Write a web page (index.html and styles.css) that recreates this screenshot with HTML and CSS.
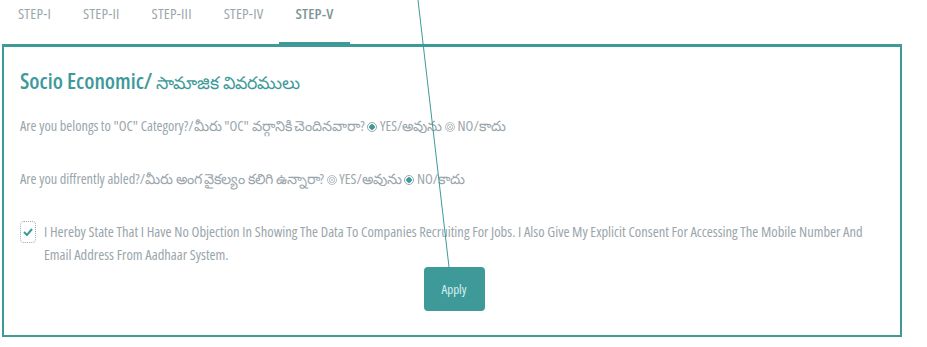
FILE: index.html
```html
<!DOCTYPE html>
<html lang="en">
<head>
    <meta charset="UTF-8">
    <meta name="viewport" content="width=device-width, initial-scale=1.0">
    <title>Registration - Step V</title>
    <link rel="stylesheet" href="styles.css">
</head>
<body>

    <ul class="steps">
        <li class="step">STEP-I</li>
        <li class="step">STEP-II</li>
        <li class="step">STEP-III</li>
        <li class="step">STEP-IV</li>
        <li class="step active">STEP-V</li>
    </ul>

    <div class="panel">
        <h2 class="panel-title">Socio Economic/ <span class="te">సామాజిక వివరములు</span></h2>

        <p class="question">
            Are you belongs to "OC" Category?/మీరు "OC" వర్గానికి చెందినవారా?
            <span class="radio checked"></span> YES/అవును
            <span class="radio"></span> NO/కాదు
        </p>

        <p class="question">
            Are you diffrently abled?/మీరు అంగ వైకల్యం కలిగి ఉన్నారా?
            <span class="radio"></span> YES/అవును
            <span class="radio checked"></span> NO/కాదు
        </p>

        <div class="consent">
            <span class="checkbox">
                <svg width="10" height="8" viewBox="0 0 10 8"><path d="M1 4 L4 7 L9 1" fill="none" stroke="#3d9a99" stroke-width="2"/></svg>
            </span>
            <p class="consent-text">I Hereby State That I Have No Objection In Showing The Data To Companies Recruiting For Jobs. I Also Give My Explicit Consent For Accessing The Mobile Number And Email Address From Aadhaar System.</p>
        </div>

        <div class="actions">
            <button class="apply">Apply</button>
        </div>
    </div>

    <!-- stray line drawn across the page -->
    <svg class="stray-line" width="927" height="347"><line x1="418" y1="0" x2="449" y2="267" stroke="#3d9a99" stroke-width="1"/></svg>

</body>
</html>
```

FILE: styles.css
```css
body {
    margin: 0;
    background-color: #ffffff;
    font-family: "Open Sans", sans-serif;
    font-stretch: condensed;
    color: #9aa6ac;
    position: relative;
}
.steps {
    list-style: none;
    margin: 0;
    padding: 0 0 0 2px;
    display: flex;
    height: 44px;
}
.step {
    padding: 5px 16px 0;
    font-size: 15px;
    letter-spacing: 0.2px;
    line-height: 16px;
    color: #9aa6ac;
    box-sizing: border-box;
}
.step.active {
    color: #7f969b;
    font-weight: 600;
    border-bottom: 2px solid #3d9a99;
}
.panel {
    margin: 0 25px 0 2px;
    border: 2px solid #3d9a99;
    border-top-width: 3px;
    height: 288px;
    padding: 0 16px;
    box-shadow: 0 2px 0 #d8dcdc;
}
.panel-title {
    margin: 19px 0 0;
    font-weight: 600;
    font-stretch: semi-condensed;
    font-size: 22px;
    line-height: 28px;
    color: #3d9a99;
}
.panel-title .te {
    font-weight: 300;
    font-size: 17.5px;
}
.question {
    margin: 20px 0 0;
    font-size: 14.3px;
    line-height: 20px;
}
.question + .question {
    margin-top: 33px;
}
.radio {
    display: inline-block;
    width: 10px;
    height: 10px;
    border: 1px solid #b6c0c4;
    border-radius: 50%;
    vertical-align: -1px;
    box-sizing: border-box;
    background: repeating-radial-gradient(circle, #c5cdd0 0 1px, #fff 1px 2px);
}
.radio.checked {
    border-color: #9aa6ac;
    background: radial-gradient(circle, #3d9a99 0 2.5px, #fff 3px);
}
.consent {
    display: flex;
    gap: 8px;
    margin-top: 31px;
    padding-right: 12px;
}
.checkbox {
    flex: none;
    width: 16px;
    height: 22px;
    border: 1px dotted #9aa6ac;
    border-radius: 4px;
    box-sizing: border-box;
    display: flex;
    align-items: center;
    justify-content: center;
    margin-top: 1px;
}
.consent-text {
    margin: 0;
    font-size: 14.5px;
    line-height: 23px;
}
.actions {
    display: flex;
    justify-content: center;
    margin-top: 1px;
}
.apply {
    width: 61px;
    height: 44px;
    background-color: #3d9a99;
    color: #d9eeee;
    border: none;
    border-radius: 4px;
    font-family: "Open Sans", sans-serif;
    font-stretch: condensed;
    font-size: 13px;
    margin-left: 4px;
}
.stray-line {
    position: absolute;
    top: 0;
    left: 0;
    pointer-events: none;
}
```
